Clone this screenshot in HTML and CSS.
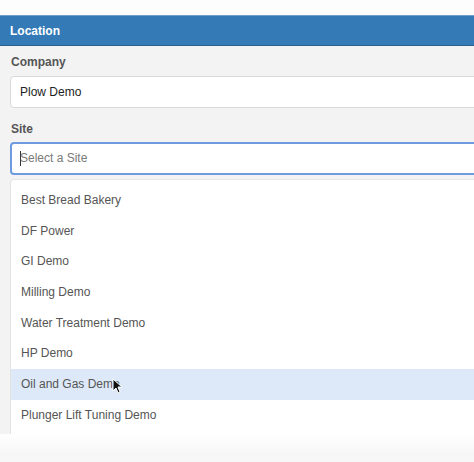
FILE: index.html
```html
<!DOCTYPE html>
<html>
<head>
<meta charset="utf-8">
<link rel="stylesheet" href="styles.css">
</head>
<body>
<div class="page">
  <div class="topgap"></div>
  <div class="panel-heading">Location</div>
  <div class="panel-body">
    <div class="label">Company</div>
    <div class="input">Plow Demo</div>
    <div class="label site-label">Site</div>
    <div class="input focus"><span class="caret"></span><span class="placeholder">Select a Site</span></div>
    <ul class="dropdown">
      <li>Best Bread Bakery</li>
      <li>DF Power</li>
      <li>GI Demo</li>
      <li>Milling Demo</li>
      <li>Water Treatment Demo</li>
      <li>HP Demo</li>
      <li class="active">Oil and Gas Demo<svg class="cursor" width="10" height="16" viewBox="0 0 10 16"><path d="M1 1 L1 13 L4 10 L6 15 L8 14 L6 9 L10 9 Z" fill="#111" stroke="#fff" stroke-width="1"/></svg></li>
      <li>Plunger Lift Tuning Demo</li>
    </ul>
  </div>
  <div class="footer"></div>
</div>
</body>
</html>
```
FILE: styles.css
```css
html, body {
  margin: 0;
  padding: 0;
  background: #ffffff;
  font-family: "Liberation Sans", Arial, sans-serif;
  overflow: hidden;
}
.page {
  width: 474px;
  height: 462px;
  display: flex;
  flex-direction: column;
}
.topgap {
  height: 15px;
  background: #fdfdfd;
}
.panel-heading {
  box-sizing: border-box;
  height: 31px;
  background: #337ab7;
  border-top: 1px solid #6f9fc9;
  border-bottom: 1px solid #2b5f8c;
  color: #ffffff;
  font-weight: bold;
  font-size: 12px;
  line-height: 30px;
  padding-left: 10px;
}
.panel-body {
  background: #f3f3f3;
  padding: 8px 0 0 10px;
  display: flex;
  flex-direction: column;
}
.label {
  color: #555555;
  font-weight: bold;
  font-size: 12px;
  line-height: 16px;
  margin-bottom: 6px;
  padding-left: 1px;
}
.site-label {
  margin-top: 13px;
  margin-bottom: 5px;
}
.input {
  height: 32px;
  box-sizing: border-box;
  margin-right: -10px;
  background: #ffffff;
  border: 1px solid #d9d9d9;
  border-radius: 4px;
  font-size: 12px;
  color: #222222;
  line-height: 30px;
  padding-left: 9px;
}
.input.focus {
  height: 33px;
  border: 2px solid #6e9be0;
  line-height: 29px;
  padding-left: 8px;
  display: flex;
  align-items: center;
}
.caret {
  width: 1px;
  height: 15px;
  background: #333;
}
.placeholder {
  color: #7a7a7a;
  margin-left: -1px;
}
.dropdown {
  list-style: none;
  margin: 4px 0 0 0;
  padding: 5px 0 3px 0;
  background: #ffffff;
  border-left: 1px solid #e2e2e2;
  border-top: 1px solid #e6e6e6;
  border-top-left-radius: 4px;
}
.dropdown li {
  height: 30.7px;
  line-height: 30.7px;
  padding-left: 10px;
  font-size: 12px;
  color: #555555;
  position: relative;
}
.dropdown li.active {
  background: #dde9f8;
}
.cursor {
  position: absolute;
  left: 101px;
  top: 9px;
}
.footer {
  flex: 1;
  background: linear-gradient(#ffffff, #f6f6f6 20px, #f7f7f7);
}
```
